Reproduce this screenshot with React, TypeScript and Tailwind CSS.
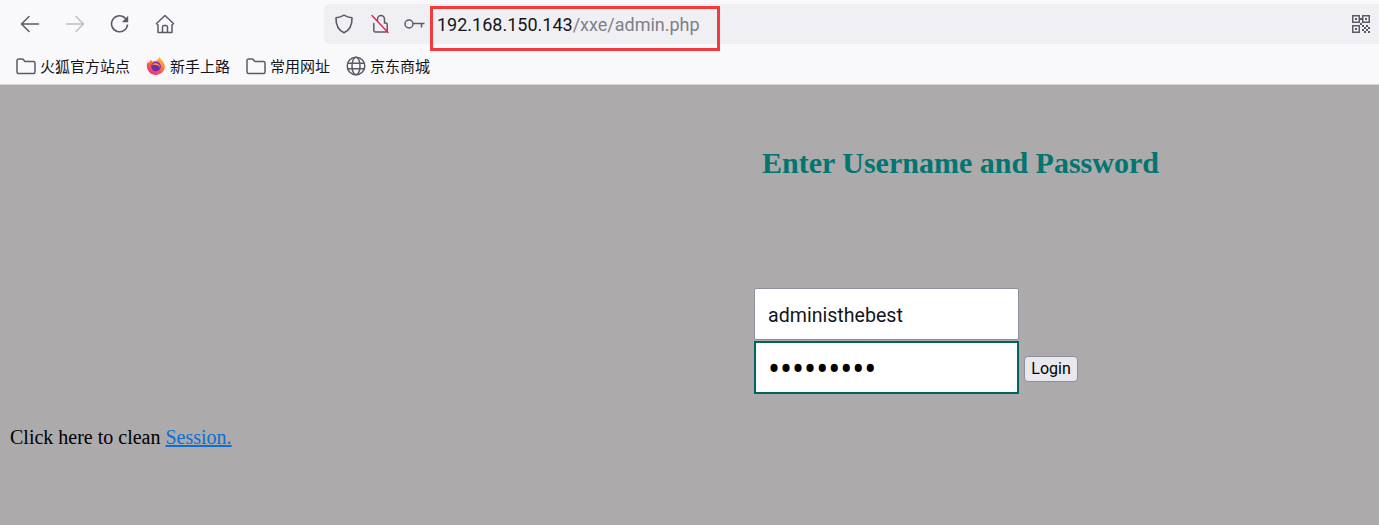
const uiFont = "font-['Noto_Sans_CJK_SC','Noto_Sans',sans-serif]"

const BackIcon = ({ className }: { className?: string }) => (
  <svg width="20" height="20" viewBox="0 0 20 20" fill="none" stroke="currentColor" strokeWidth="1.500" strokeLinecap="round" strokeLinejoin="round" className={className}>
    <path d="M1.500 10h17M9 2.500 1.500 10 9 17.500" />
  </svg>
)

const ForwardIcon = ({ className }: { className?: string }) => (
  <svg width="20" height="20" viewBox="0 0 20 20" fill="none" stroke="currentColor" strokeWidth="1.500" strokeLinecap="round" strokeLinejoin="round" className={className}>
    <path d="M1.500 10h17M11 2.500l7.500 7.500-7.500 7.500" />
  </svg>
)

const ReloadIcon = ({ className }: { className?: string }) => (
  <svg width="20" height="20" viewBox="0 0 20 20" fill="none" stroke="currentColor" strokeWidth="1.600" strokeLinejoin="round" className={className}>
    <path d="M17.500 10.500A8 8 0 1 1 14.500 3.500L17.500 7" />
    <path d="M18.200 1.800v6.400h-6.400z" fill="currentColor" stroke="none" />
  </svg>
)

const HomeIcon = ({ className }: { className?: string }) => (
  <svg width="20" height="20" viewBox="0 0 20 20" fill="none" stroke="currentColor" strokeWidth="1.500" strokeLinejoin="round" className={className}>
    <path d="M10 1.500 1.500 9.500 3 11V18.500H17V11L18.500 9.500z" />
    <path d="M7.500 18.500V13a1.500 1.500 0 0 1 1.500-1.500h2a1.500 1.500 0 0 1 1.500 1.500v5.500" />
  </svg>
)

const ShieldIcon = () => (
  <svg width="20" height="20" viewBox="0 0 20 20" fill="none" stroke="#5b5b66" strokeWidth="1.600" strokeLinejoin="round">
    <path d="M10 1.200c2.500 1.600 5 2.300 8 2.500.2 7-2 12.300-8 15.100C4 16 1.800 10.700 2 3.700c3-.2 5.500-.9 8-2.500z" />
  </svg>
)

const LockOff = () => (
  <svg width="20" height="20" viewBox="0 0 20 20" fill="none">
    <path d="M7.500 6.500V5a3.500 3.500 0 0 1 7 0v4h1.200A1.500 1.500 0 0 1 17.200 10.500v6a1.500 1.500 0 0 1-1.500 1.500H5.300A1.500 1.500 0 0 1 3.800 16.500v-7" stroke="#5b5b66" strokeWidth="1.500" strokeLinecap="round" />
    <path d="M2 1.500 18 18.500" stroke="#e22850" strokeWidth="1.500" strokeLinecap="round" />
  </svg>
)

const KeyIcon = () => (
  <svg width="21" height="12" viewBox="0 0 21 12" fill="none" stroke="#5b5b66" strokeWidth="1.500">
    <circle cx="5" cy="6" r="4" />
    <path d="M9 5.500h11.500M17.500 5.500v4" />
  </svg>
)

const QrIcon = () => (
  <svg width="18" height="18" viewBox="0 0 18 18" fill="#5b5b66">
    <path fillRule="evenodd" d="M0 0h8v8H0zM1.500 1.500v5h5v-5zM10 0h8v8h-8zM11.500 1.500v5h5v-5zM0 10h8v8H0zM1.500 11.500v5h5v-5z" />
    <path d="M3 3h2v2H3zM13 3h2v2h-2zM3 13h2v2H3zM8 3h2v2H8zM8 8h2v2H8zM10 10h2v2h-2zM14 10h2v2h-2zM12 12h2v2h-2zM16 12h2v2h-2zM10 14h2v2h-2zM14 14h2v2h-2zM12 16h2v2h-2zM16 16h2v2h-2z" />
  </svg>
)

const FolderIcon = () => (
  <svg width="20" height="20" viewBox="0 0 20 20" fill="none" stroke="#5b5b66" strokeWidth="1.500" strokeLinejoin="round">
    <path d="M1 4.500A1.500 1.500 0 0 1 2.500 3h4.300l2.200 2.500h8.500A1.500 1.500 0 0 1 19 7v9a1.500 1.500 0 0 1-1.500 1.500h-15A1.500 1.500 0 0 1 1 16z" />
  </svg>
)

const GlobeIcon = () => (
  <svg width="20" height="20" viewBox="0 0 20 20" fill="none" stroke="#5b5b66" strokeWidth="1.500">
    <circle cx="10" cy="10" r="8.800" />
    <ellipse cx="10" cy="10" rx="4" ry="8.800" />
    <path d="M1.500 7.200h17M1.500 12.800h17" />
  </svg>
)

const FirefoxLogo = () => (
  <svg width="20" height="20" viewBox="0 0 20 20">
    <defs>
      <linearGradient id="fx" x1="0.800" y1="0" x2="0.200" y2="1">
        <stop offset="0" stopColor="#ffd336" />
        <stop offset="0.450" stopColor="#ff7139" />
        <stop offset="1" stopColor="#ee2a7b" />
      </linearGradient>
    </defs>
    <path d="M13.500 0.500c0.500 2 2 3 3.500 5 1.500 2.200 2 4 1.800 5.500A9 9 0 1 1 2 5.500c0.300 0.800 0.600 1.200 1 1.500 0.300-1.500 1.300-2.700 2.500-3.300-0.100 1 0.400 1.600 1.300 1.900 1.500-0.600 2.800-1.200 4.200-1.300 1-0.900 2-2 2.500-3.800z" fill="url(#fx)" />
    <circle cx="10" cy="10.500" r="4.800" fill="#6e2bb8" />
    <path d="M6 8.500c1.500-1.500 5-2 7 0 1 1.200 1 2.500 0.500 3.500 0-1.500-1-2.500-2.500-2.700C9 9 7.500 9 6 8.500z" fill="#ff9a2e" />
  </svg>
)

const Bookmark = ({ icon, label }: { icon: React.ReactNode; label: string }) => (
  <div className="flex items-center gap-[4px]">
    {icon}
    <span className="text-[15px] leading-none text-[#15141a]">{label}</span>
  </div>
)

const App = () => {
  return (
    <div className={`relative flex h-[525px] w-[1379px] flex-col overflow-hidden ${uiFont}`}>
      {/* Browser toolbar */}
      <div className="flex h-[48px] items-center bg-[#f9f9fb]">
        <div className="flex w-[324px] items-center pl-[20px] text-[#5b5b66]">
          <BackIcon />
          <ForwardIcon className="ml-[25px] text-[#bdbdc3]" />
          <ReloadIcon className="ml-[25px]" />
          <HomeIcon className="ml-[25px]" />
        </div>
        <div className="flex h-[40px] flex-1 items-center rounded-l-[6px] bg-[#f0f0f4] pl-[10px] pr-[9px]">
          <ShieldIcon />
          <div className="ml-[16px]"><LockOff /></div>
          <div className="ml-[14px]"><KeyIcon /></div>
          <div className="ml-[12px] flex-1 pt-[1px] font-['Roboto',sans-serif] text-[18px] leading-none">
            <span className="text-[#15141a]">192.168.150.143</span>
            <span className="text-[#7f7f87]">/xxe/admin.php</span>
          </div>
          <QrIcon />
        </div>
      </div>

      {/* Bookmarks */}
      <div className="flex h-[37px] items-center gap-[16px] border-b border-[#d8d8dc] bg-[#f9f9fb] pb-[1px] pl-[16px]">
        <Bookmark icon={<FolderIcon />} label="火狐官方站点" />
        <Bookmark icon={<FirefoxLogo />} label="新手上路" />
        <Bookmark icon={<FolderIcon />} label="常用网址" />
        <Bookmark icon={<GlobeIcon />} label="京东商城" />
      </div>

      {/* Page */}
      <div className="flex-1 bg-[#acaaab] font-['Liberation_Serif',serif]">
        <h2 className="pl-[762px] pt-[60px] text-[30px] font-bold leading-[36px] text-[#007571]">
          Enter Username and Password
        </h2>
        <form className="flex items-end pl-[754px] pt-[107px]">
          <div className="flex flex-col gap-[1px]">
            <input
              readOnly
              value="administhebest"
              className="h-[52px] w-[265px] rounded-[2px] border border-[#8f8f9d] bg-white px-[13px] pt-[2px] font-['Roboto',sans-serif] text-[19.600px] text-[#15141a] outline-none"
            />
            <input
              readOnly
              type="password"
              value="123456789"
              className="h-[53px] w-[265px] border-2 border-[#006560] bg-white px-[12px] font-['Noto_Sans',sans-serif] text-[32px] text-black outline-none"
            />
          </div>
          <button
            type="button"
            className="mb-[12px] ml-[5px] h-[26px] w-[54px] rounded-[4px] border border-[#8f8f9d] bg-[#e9e9ed] font-['Roboto',sans-serif] text-[16px] leading-none text-black"
          >
            Login
          </button>
        </form>
        <p className="pl-[10px] pt-[32px] text-[20px] leading-[23px] text-black">
          Click here to clean <a href="#" className="text-[#0b6fd6] underline">Session.</a>
        </p>
      </div>

      {/* Red annotation box around the address */}
      <div className="absolute left-[430px] top-[6px] h-[45px] w-[290px] border-[3px] border-[#f23c3c]" />
    </div>
  )
}

export default App
